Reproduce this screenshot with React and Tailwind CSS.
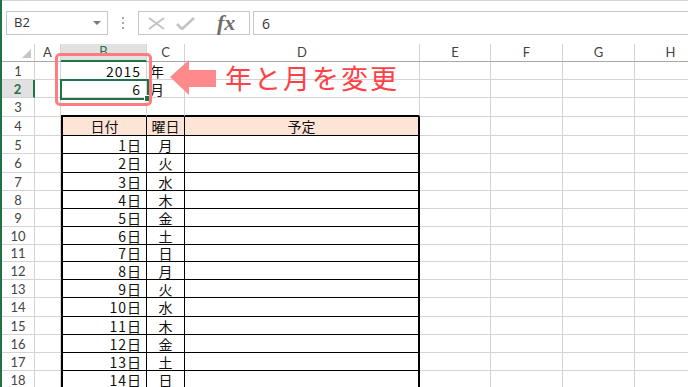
import React from 'react'

const DAYS = ['月', '火', '水', '木', '金', '土', '日']

// row heights as measured off the sheet (rows 1..18)
const ROW_H = ['h-[18px]', 'h-[18px]', 'h-[19px]', 'h-[19px]', 'h-[18px]', 'h-[19px]', 'h-[18px]', 'h-[18px]', 'h-[18px]', 'h-[18px]', 'h-[17px]', 'h-[18px]', 'h-[18px]', 'h-[19px]', 'h-[18px]', 'h-[18px]', 'h-[18px]', 'h-[18px]']

const GRAY = 'border-r border-b border-[#d4d4d4]'

function rowCells(r) {
  if (r === 1) return { b: '2015', c: '年' }
  if (r === 2) return { b: '6', c: '月' }
  if (r === 3) return {}
  if (r === 4) return { b: '日付', c: '曜日', d: '予定' }
  const n = r - 4
  return { b: n + '日', c: DAYS[(n - 1) % 7] }
}

function Row({ r }) {
  const h = ROW_H[r - 1]
  const v = rowCells(r)
  const sel = r === 2
  const inTable = r >= 4
  const head = r === 4

  let bCls, cCls, dCls
  if (inTable) {
    const bg = head ? 'bg-[#fce4d6]' : 'bg-white'
    bCls = `w-[86px] border-l-2 border-r border-b border-black ${bg} ${head ? 'justify-center' : 'justify-end pr-[4px] tracking-[1px]'}`
    cCls = `w-[38px] border-r border-b border-black justify-center ${bg}`
    dCls = `w-[235px] border-r-2 border-b border-black justify-center ${bg}`
  } else if (r === 3) {
    bCls = 'w-[86px] border-r border-r-[#d4d4d4] border-b-2 border-b-black'
    cCls = 'w-[38px] border-r border-r-[#d4d4d4] border-b-2 border-b-black'
    dCls = 'w-[235px] border-r border-r-[#d4d4d4] border-b-2 border-b-black'
  } else {
    bCls = `w-[86px] ${GRAY} justify-end pr-[5px] tracking-[1px]`
    cCls = `w-[38px] ${GRAY} pl-[3px]`
    dCls = `w-[235px] ${GRAY}`
  }

  return (
    <div className={`flex ${h}`}>
      <div className={sel
        ? `w-[33px] shrink-0 flex items-center justify-center border-b border-[#d4d4d4] border-r-2 border-r-[#217346] bg-[#e1e1e1] text-[#217346] font-bold text-[13px] leading-[14px] font-['Lato',sans-serif]`
        : `w-[33px] shrink-0 flex items-center justify-center ${GRAY} text-[#444] text-[13px] leading-[14px] font-['Lato',sans-serif]`}>
        {r}
      </div>
      <div className={`w-[26px] shrink-0 ${GRAY}`} />
      <div className={`shrink-0 flex items-center text-[14px] leading-[14px] ${bCls}`}>{v.b}</div>
      <div className={`shrink-0 flex items-center text-[14px] leading-[14px] ${cCls}`}>{v.c}</div>
      <div className={`shrink-0 flex items-center text-[14px] leading-[14px] ${dCls}`}>{v.d}</div>
      <div className={`w-[71px] shrink-0 ${GRAY}`} />
      <div className={`w-[72px] shrink-0 ${GRAY}`} />
      <div className={`w-[72px] shrink-0 ${GRAY}`} />
      <div className={`w-[72px] shrink-0 ${GRAY}`} />
    </div>
  )
}

function FormulaBar() {
  return (
    <div className="h-[44px] border-t border-[#d5d5d5] flex items-start pt-[10px] font-['Open_Sans','Noto_Sans',sans-serif]">
      <div className="ml-[4px] w-[102px] h-[24px] shrink-0 border border-[#c6c6c6] flex items-center justify-between pl-[7px] pr-[6px] text-[13px] text-[#333]">
        <span>B2</span>
        <svg width="8" height="5" viewBox="0 0 8 5"><polygon points="0,0 8,0 4,4" fill="#7a7a7a" /></svg>
      </div>
      <div className="w-[30px] h-[24px] shrink-0 flex flex-col items-center justify-center gap-[3px]">
        <div className="w-[2px] h-[2px] bg-[#a6a6a6]" />
        <div className="w-[2px] h-[2px] bg-[#a6a6a6]" />
        <div className="w-[2px] h-[2px] bg-[#a6a6a6]" />
      </div>
      <div className="w-[112px] h-[24px] shrink-0 border border-[#c6c6c6] flex items-center pl-[8px] gap-[10px]">
        <svg width="19" height="13" viewBox="0 0 19 13"><path d="M2 1 L17 12 M17 1 L2 12" stroke="#c3c3c3" strokeWidth="2" fill="none" /></svg>
        <svg width="19" height="13" viewBox="0 0 19 13"><path d="M1 7 L6 12 L18 1" stroke="#c3c3c3" strokeWidth="2.6" fill="none" /></svg>
        <span className="ml-[12px] text-[22px] leading-none italic font-bold text-[#6d6d6d] font-['Liberation_Serif',serif]">fx</span>
      </div>
      <div className="ml-[3px] w-[500px] h-[24px] shrink-0 border border-[#c6c6c6] flex items-center pl-[8px] text-[14px] text-[#333]">
        6
      </div>
    </div>
  )
}

function ColumnHeader() {
  const base = 'shrink-0 flex items-center justify-center border-r border-[#d4d4d4] text-[13px] text-[#444]'
  return (
    <div className="flex h-[18px] border-b border-[#a8a8a8] font-['Lato',sans-serif]">
      <div className="w-[33px] shrink-0 border-r border-[#d4d4d4] flex items-end justify-end pr-[3px] pb-[3px]">
        <svg width="9" height="9" viewBox="0 0 9 9"><polygon points="9,0 9,9 0,9" fill="#c6c6c6" /></svg>
      </div>
      <div className={`w-[26px] ${base}`}>A</div>
      <div className="w-[86px] shrink-0 flex items-center justify-center border-r border-[#d4d4d4] border-b-2 border-b-[#217346] bg-[#e1e1e1] text-[13px] text-[#217346] -mb-[1px]">B</div>
      <div className={`w-[38px] ${base}`}>C</div>
      <div className={`w-[235px] ${base}`}>D</div>
      <div className={`w-[71px] ${base}`}>E</div>
      <div className={`w-[72px] ${base}`}>F</div>
      <div className={`w-[72px] ${base}`}>G</div>
      <div className={`w-[72px] ${base}`}>H</div>
    </div>
  )
}

export default function App() {
  const rows = Array.from({ length: 18 }, (_, i) => i + 1)
  return (
    <div className="relative w-[688px] h-[387px] overflow-hidden bg-white border-l-2 border-[#217346] text-[#111] font-['Noto_Sans_CJK_JP',sans-serif]">
      <FormulaBar />
      <ColumnHeader />
      <div className="font-['Noto_Sans_CJK_JP',sans-serif]">
        {rows.map(r => <Row key={r} r={r} />)}
      </div>

      {/* selected cell B2 */}
      <div className="absolute left-[58px] top-[79px] w-[89px] h-[21px] border-2 border-[#217346]" />
      <div className="absolute left-[142px] top-[95px] w-[7px] h-[7px] bg-[#217346] border border-white" />

      {/* annotation */}
      <div className="absolute left-[53px] top-[53px] w-[97px] h-[53px] border-[3px] border-[#ff7c80] rounded-[5px]" />
      <svg className="absolute left-[166px] top-[58px]" width="50" height="40" viewBox="0 0 50 40">
        <polygon points="2,19 21,2 21,12 48,12 48,29 21,29 21,37" fill="#ff8a8c" />
      </svg>
      <div className="absolute left-[223px] top-[60px] text-[27px] leading-[36px] tracking-[2px] text-[#ff4046] font-['Noto_Sans_CJK_JP',serif]">
        年と月を変更
      </div>
    </div>
  )
}
